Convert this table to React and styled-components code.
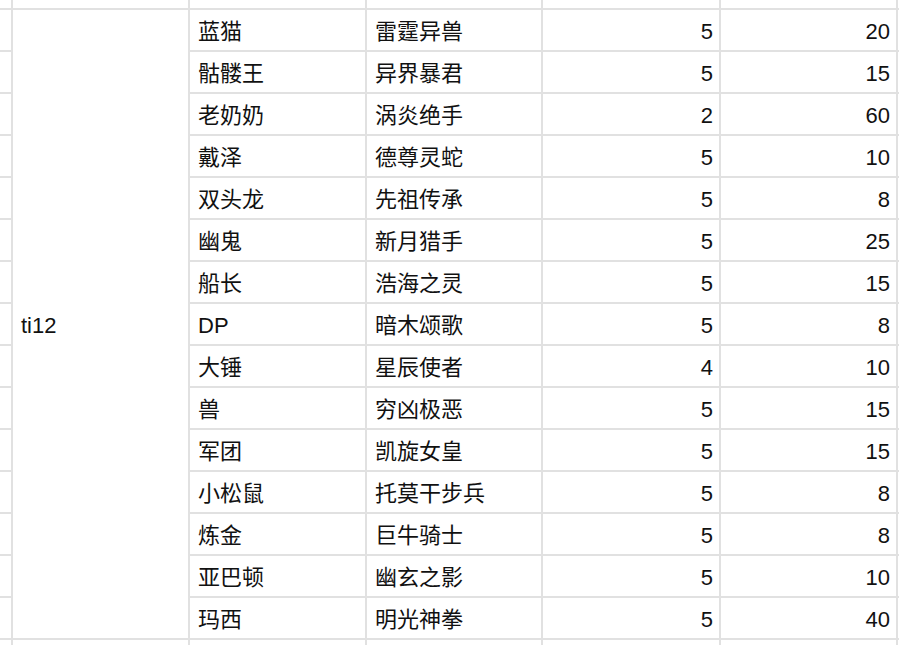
import React from 'react';
import styled, { createGlobalStyle } from 'styled-components';

const GlobalStyle = createGlobalStyle`
  html, body {
    margin: 0;
    padding: 0;
    background: #fff;
    overflow: hidden;
  }
  body {
    font-family: "Liberation Sans", Arial, "Noto Sans CJK SC", sans-serif;
  }
`;

const rows = [
  ['蓝猫', '雷霆异兽', 5, 20],
  ['骷髅王', '异界暴君', 5, 15],
  ['老奶奶', '涡炎绝手', 2, 60],
  ['戴泽', '德尊灵蛇', 5, 10],
  ['双头龙', '先祖传承', 5, 8],
  ['幽鬼', '新月猎手', 5, 25],
  ['船长', '浩海之灵', 5, 15],
  ['DP', '暗木颂歌', 5, 8],
  ['大锤', '星辰使者', 4, 10],
  ['兽', '穷凶极恶', 5, 15],
  ['军团', '凯旋女皇', 5, 15],
  ['小松鼠', '托莫干步兵', 5, 8],
  ['炼金', '巨牛骑士', 5, 8],
  ['亚巴顿', '幽玄之影', 5, 10],
  ['玛西', '明光神拳', 5, 40],
];

const COLS = 7;
const LINE = '#e1e1e1';

const Sheet = styled.div`
  display: grid;
  grid-template-columns: 13px 177px 177px 176px 178px 177px 40px;
  grid-template-rows: 10px repeat(${rows.length}, 42px) 40px;
  width: 938px;
  height: 700px;
  color: #111;
  font-size: 22px;
`;

const Cell = styled.div`
  box-sizing: border-box;
  border-right: 2px solid ${LINE};
  border-bottom: 2px solid ${LINE};
  display: flex;
  align-items: center;
  justify-content: ${({ $num }) => ($num ? 'flex-end' : 'flex-start')};
  padding: ${({ $num }) => ($num ? '3px 6px 0 0' : '3px 0 0 8px')};
  white-space: nowrap;
  overflow: hidden;
  line-height: 1;
`;

const Edge = styled(Cell)`
  padding: 0;
`;

const Merged = styled(Cell)`
  grid-row: 2 / span ${rows.length};
  grid-column: 2;
  padding-left: 8px;
  padding-top: 4px;
`;

const Blank = () =>
  Array.from({ length: COLS }).map((_, i) => <Edge key={i} />);

export default function App() {
  return (
    <>
      <GlobalStyle />
      <Sheet>
        <Blank />
        {rows.map(([hero, item, count, price], i) => (
          <React.Fragment key={hero}>
            <Edge />
            {i === 0 && <Merged>ti12</Merged>}
            <Cell>{hero}</Cell>
            <Cell>{item}</Cell>
            <Cell $num>{count}</Cell>
            <Cell $num>{price}</Cell>
            <Edge />
          </React.Fragment>
        ))}
        <Blank />
      </Sheet>
    </>
  );
}
